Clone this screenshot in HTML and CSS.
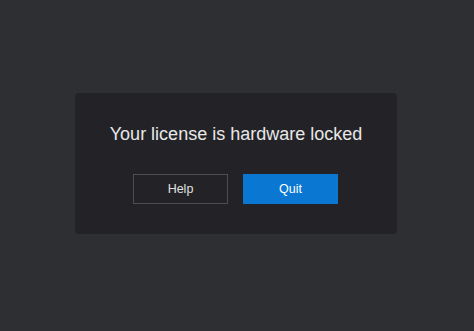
FILE: index.html
```html
<!DOCTYPE html>
<html>
<head>
<meta charset="utf-8">
<link rel="stylesheet" href="styles.css">
</head>
<body>
<div class="screen">
  <div class="dialog">
    <div class="title">Your license is hardware locked</div>
    <div class="actions">
      <button class="btn btn-secondary">Help</button>
      <button class="btn btn-primary">Quit</button>
    </div>
  </div>
</div>
</body>
</html>
```
FILE: styles.css
```css
html, body {
  margin: 0;
  padding: 0;
  width: 474px;
  height: 331px;
  overflow: hidden;
}
body {
  background: #2e2f33;
  font-family: "Liberation Sans", Arial, sans-serif;
}
.screen {
  width: 474px;
  height: 331px;
  box-sizing: border-box;
  padding-top: 93px;
  padding-left: 75px;
}
.dialog {
  width: 322px;
  height: 141px;
  box-sizing: border-box;
  background: #232327;
  border-radius: 4px;
  padding-top: 30px;
  display: flex;
  flex-direction: column;
  align-items: center;
}
.title {
  color: #e8e8e8;
  font-size: 18px;
  line-height: 22px;
}
.actions {
  margin-top: 29px;
  margin-right: 1px;
  display: flex;
  gap: 15px;
}
.btn {
  width: 95px;
  height: 30px;
  box-sizing: border-box;
  font-family: "Liberation Sans", Arial, sans-serif;
  font-size: 12.5px;
  padding: 0;
  border-radius: 0;
}
.btn-secondary {
  background: transparent;
  color: #e0e0e0;
  border: 1px solid #4d4d52;
}
.btn-primary {
  background: #0a78d2;
  color: #ffffff;
  border: none;
}
```
